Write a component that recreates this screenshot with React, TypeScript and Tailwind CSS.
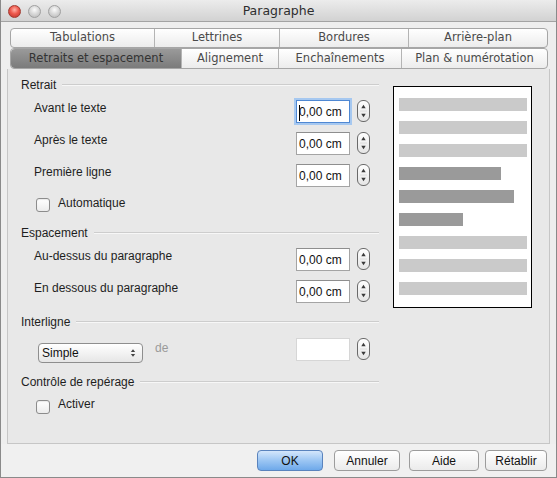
import React from "react";

function Spinner() {
  return (
    <svg width="13" height="22" viewBox="0 0 13 22" className="block">
      <defs>
        <linearGradient id="spg" x1="0" y1="0" x2="0" y2="1">
          <stop offset="0" stopColor="#ffffff" />
          <stop offset="1" stopColor="#e4e4e4" />
        </linearGradient>
      </defs>
      <rect x="0.5" y="0.5" width="12" height="21" rx="5.5" fill="url(#spg)" stroke="#6a6a6a" />
      <line x1="3" y1="11" x2="10" y2="11" stroke="#d8d8d8" strokeWidth="0.8" />
      <polygon points="4.3,8.2 8.7,8.2 6.5,4.8" fill="#3a3a3a" />
      <polygon points="4.3,13.8 8.7,13.8 6.5,17.2" fill="#3a3a3a" />
    </svg>
  );
}

function Checkbox() {
  return (
    <div className="w-[14px] h-[14px] rounded-[3px] border border-[#8c8c8c] bg-gradient-to-b from-white to-[#ececec] shadow-[inset_0_1px_1px_rgba(0,0,0,0.08)] shrink-0" />
  );
}

function SectionHeader({ label }: { label: string }) {
  return (
    <div className="h-[16px] flex items-center">
      <span className="text-[12px] leading-[16px] text-[#1e1e1e]">{label}</span>
      <div className="flex-1 ml-[6px] h-[2px] border-t border-[#cdcdcd] border-b border-b-[#f7f7f7]" />
    </div>
  );
}

function ValueField({ focused = false, empty = false }: { focused?: boolean; empty?: boolean }) {
  return (
    <div className="flex items-start mr-[9px]">
      {focused ? (
        <div className="w-[54px] h-[23px] bg-white border border-[#4f88d3] shadow-[0_0_0_2px_#a6c8f0] flex items-center pl-[2px]">
          <span className="relative text-[12px] leading-[14px] text-[#111]">
            0,00 cm
            <span className="absolute left-[0px] top-[0px] w-[1px] h-[16px] bg-black" />
          </span>
        </div>
      ) : empty ? (
        <div className="w-[54px] h-[23px] bg-white border border-[#d6d6d6]" />
      ) : (
        <div className="w-[54px] h-[23px] bg-white border border-[#a4a4a4] border-t-[#8e8e8e] flex items-center pl-[2px]">
          <span className="text-[12px] leading-[14px] text-[#111]">0,00 cm</span>
        </div>
      )}
      <div className="ml-[7px]">
        <Spinner />
      </div>
    </div>
  );
}

function FieldRow({ label, focused = false }: { label: string; focused?: boolean }) {
  return (
    <div className="h-[32px] flex items-start pt-[2px]">
      <span className="pl-[13px] flex-1 text-[12px] leading-[16px] text-[#1e1e1e]">{label}</span>
      <ValueField focused={focused} />
    </div>
  );
}

function Bar({ w, dark = false }: { w: string; dark?: boolean }) {
  return <div className={`${w} h-[13px] ${dark ? "bg-[#9a9a9a]" : "bg-[#cacaca]"}`} />;
}

function Button({ label, w, primary = false }: { label: string; w: string; primary?: boolean }) {
  return (
    <div
      className={`${w} h-[21px] rounded-[4px] flex items-center justify-center text-[12px] text-[#111] ${
        primary
          ? "border border-[#5a83bd] bg-gradient-to-b from-[#d4e6fb] via-[#9cc6f3] to-[#6ea9ea]"
          : "border border-[#9c9c9c] bg-gradient-to-b from-white to-[#ebebeb]"
      }`}
    >
      {label}
    </div>
  );
}

function Tab({ label, w, first = false, last = false, selected = false }: { label: string; w: string; first?: boolean; last?: boolean; selected?: boolean }) {
  return (
    <div
      className={`${w} h-full flex items-center justify-center ${first ? "" : "border-l border-[#b4b4b4]"} ${
        selected ? "bg-gradient-to-b from-[#9a9a9a] to-[#7b7b7b] text-[#333333] rounded-l-[4px]" : "text-[#4a4a4a]"
      } ${last ? "rounded-r-[4px]" : ""}`}
    >
      {label}
    </div>
  );
}

export default function App() {
  return (
    <div className="w-[557px] h-[478px] flex flex-col bg-[#eeeeee] border-x border-b border-[#8a8a8a] overflow-hidden font-['Liberation_Sans',Arial,sans-serif]">
      {/* Title bar */}
      <div className="h-[22px] shrink-0 grid grid-cols-[1fr_auto_1fr] items-center bg-gradient-to-b from-[#ececec] to-[#d2d2d2] border-b border-[#a3a3a3]">
        <div className="flex items-center pl-[7px] gap-[7px]">
          <div className="w-[13px] h-[13px] rounded-full border border-[#a33a30] bg-[radial-gradient(circle_at_50%_35%,#ffb3a8_0%,#ee5a4e_45%,#b8322a_100%)]" />
          <div className="w-[13px] h-[13px] rounded-full border border-[#a0a0a0] bg-[radial-gradient(circle_at_50%_35%,#fbfbfb_0%,#d6d6d6_50%,#b5b5b5_100%)]" />
          <div className="w-[13px] h-[13px] rounded-full border border-[#a0a0a0] bg-[radial-gradient(circle_at_50%_35%,#fbfbfb_0%,#d6d6d6_50%,#b5b5b5_100%)]" />
        </div>
        <div className="text-[12.5px] text-[#2e2e2e] font-['DejaVu_Sans',sans-serif] leading-[22px]">Paragraphe</div>
        <div />
      </div>

      {/* Tabs */}
      <div className="pt-[6px] pl-[9px] flex flex-col font-['DejaVu_Sans',sans-serif] text-[11.5px]">
        <div className="w-[538px] h-[20px] flex rounded-[4px] border border-[#a6a6a6] bg-gradient-to-b from-white to-[#ececec]">
          <Tab label="Tabulations" w="w-[143px]" first />
          <Tab label="Lettrines" w="w-[125px]" />
          <Tab label="Bordures" w="w-[129px]" />
          <Tab label="Arrière-plan" w="flex-1" last />
        </div>
        <div className="w-[538px] h-[21px] flex rounded-[4px] border border-[#a6a6a6] bg-gradient-to-b from-white to-[#ececec]">
          <Tab label="Retraits et espacement" w="w-[170px]" first selected />
          <Tab label="Alignement" w="w-[97px]" />
          <Tab label="Enchaînements" w="w-[123px]" />
          <Tab label="Plan & numérotation" w="flex-1" last />
        </div>
      </div>

      {/* Panel */}
      <div className="mx-[6px] h-[375px] shrink-0 bg-[#e8e8e8] border-x border-b border-[#c6c6c6] flex items-start pt-[8px] pl-[13px]">
        <div className="w-[358px] flex flex-col">
          <SectionHeader label="Retrait" />
          <div className="mt-[5px]">
            <FieldRow label="Avant le texte" focused />
            <FieldRow label="Après le texte" />
            <FieldRow label="Première ligne" />
          </div>
          <div className="h-[20px] flex items-start pl-[15px]">
            <div className="mt-[4px]">
              <Checkbox />
            </div>
            <span className="ml-[8px] mt-[2px] text-[12px] leading-[14px] text-[#1e1e1e]">Automatique</span>
          </div>

          <div className="mt-[11px]">
            <SectionHeader label="Espacement" />
          </div>
          <div className="mt-[5px]">
            <FieldRow label="Au-dessus du paragraphe" />
            <FieldRow label="En dessous du paragraphe" />
          </div>

          <div className="mt-[4px]">
            <SectionHeader label="Interligne" />
          </div>
          <div className="h-[44px] flex items-start pt-[8px]">
            <div className="ml-[17px] mt-[5px] w-[105px] h-[20px] rounded-[4px] border border-[#8e8e8e] bg-gradient-to-b from-white to-[#e6e6e6] flex items-center justify-between pl-[3px] pr-[6px]">
              <span className="text-[12px] leading-[14px] text-[#111]">Simple</span>
              <svg width="6" height="10" viewBox="0 0 6 10">
                <polygon points="0.8,4 5.2,4 3,1.2" fill="#444" />
                <polygon points="0.8,6 5.2,6 3,8.8" fill="#444" />
              </svg>
            </div>
            <span className="ml-[12px] mt-[3px] flex-1 text-[12px] leading-[14px] text-[#9a9a9a]">de</span>
            <ValueField empty />
          </div>

          <SectionHeader label="Contrôle de repérage" />
          <div className="flex items-start pl-[15px]">
            <div className="mt-[10px]">
              <Checkbox />
            </div>
            <span className="ml-[8px] mt-[7px] text-[12px] leading-[14px] text-[#1e1e1e]">Activer</span>
          </div>
        </div>

        {/* Preview */}
        <div className="ml-[14px] mt-[9px] w-[139px] h-[222px] border border-black bg-white pt-[11px] pl-[5px] flex flex-col gap-[10px]">
          <Bar w="w-[128px]" />
          <Bar w="w-[128px]" />
          <Bar w="w-[128px]" />
          <Bar w="w-[102px]" dark />
          <Bar w="w-[115px]" dark />
          <Bar w="w-[64px]" dark />
          <Bar w="w-[128px]" />
          <Bar w="w-[128px]" />
          <Bar w="w-[128px]" />
        </div>
      </div>

      {/* Footer */}
      <div className="flex-1 flex items-start justify-end pt-[6px] pr-[9px] bg-[#f0f0f0]">
        <Button label="OK" w="w-[66px]" primary />
        <div className="ml-[11px]">
          <Button label="Annuler" w="w-[66px]" />
        </div>
        <div className="ml-[9px]">
          <Button label="Aide" w="w-[70px]" />
        </div>
        <div className="ml-[6px]">
          <Button label="Rétablir" w="w-[62px]" />
        </div>
      </div>
    </div>
  );
}
